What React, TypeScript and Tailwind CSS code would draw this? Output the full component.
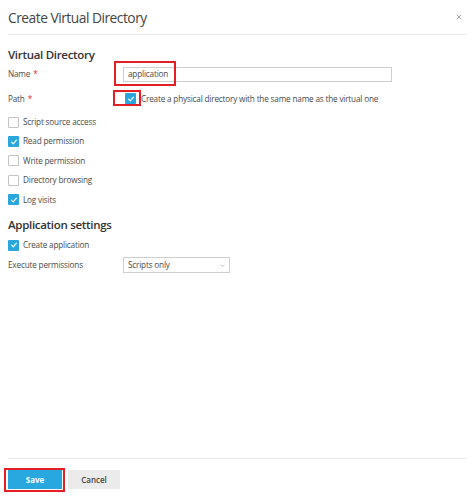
import React from "react";

const font = { fontFamily: '"Open Sans", "Noto Sans", sans-serif' };

function Check({ checked }: { checked: boolean }) {
  if (!checked) {
    return <span className="block w-[11px] h-[11px] shrink-0 border border-[#c4c4c4] bg-white rounded-[1px]" />;
  }
  return (
    <span className="flex items-center justify-center w-[11px] h-[11px] shrink-0 bg-[#2ba6dc] rounded-[1px]">
      <svg viewBox="0 0 10 10" className="w-[8px] h-[8px]" fill="none" stroke="#fff" strokeWidth="1.4" strokeLinecap="round" strokeLinejoin="round">
        <path d="M2 5.2 L4.1 7.3 L8 2.6" />
      </svg>
    </span>
  );
}

function CheckRow({ label, checked }: { label: string; checked: boolean }) {
  return (
    <div className="h-[19.4px] flex items-center gap-[4px]">
      <Check checked={checked} />
      <span className="text-[8.2px] tracking-[-0.18px] text-[#4a4a4a]">{label}</span>
    </div>
  );
}

function Required() {
  return <span className="text-[#e0262b] ml-[3px]">*</span>;
}

export default function App() {
  return (
    <div className="w-[474px] h-[500px] bg-white flex flex-col px-2 text-[#333]" style={font}>
      <div className="h-[35px] flex items-center justify-between border-b border-[#e8e8e8] shrink-0">
        <h1 className="text-[13.8px] tracking-[-0.5px] text-[#444] font-normal leading-none pt-[1px]">Create Virtual Directory</h1>
        <svg viewBox="0 0 8 8" className="w-[6px] h-[6px] mr-[4px]" stroke="#9a9a9a" strokeWidth="1.2">
          <path d="M1 1 L7 7 M7 1 L1 7" />
        </svg>
      </div>

      <div className="flex-1">
        <h2 className="mt-[11px] h-[17px] text-[11.5px] tracking-[-0.3px] leading-[17px] font-semibold text-[#333]">Virtual Directory</h2>

        <div className="h-[22px] grid grid-cols-[115px_1fr] items-center">
          <span className="text-[8.2px] tracking-[-0.18px] text-[#4a4a4a]">
            Name
            <Required />
          </span>
          <div className="relative w-[269px]">
            <div className="h-[15px] border border-[#cfcfcf] bg-white flex items-center px-[4px] text-[8.2px] tracking-[-0.18px] text-[#4a4a4a]">
              application
            </div>
            <div className="absolute left-[-9px] top-[-6px] w-[62px] h-[25px] border-2 border-[#e31e24]" />
          </div>
        </div>

        <div className="mt-[4px] h-[20px] grid grid-cols-[117px_1fr] items-center">
          <span className="text-[8.2px] tracking-[-0.18px] text-[#4a4a4a]">
            Path
            <Required />
          </span>
          <div className="flex items-center gap-[5px]">
            <div className="relative flex">
              <Check checked />
              <div className="absolute left-[-12px] top-[-3px] w-[28px] h-[16px] border-2 border-[#e31e24]" />
            </div>
            <span className="text-[8.2px] tracking-[-0.18px] text-[#4a4a4a]">Create a physical directory with the same name as the virtual one</span>
          </div>
        </div>

        <div className="mt-[3.5px]">
          <CheckRow label="Script source access" checked={false} />
          <CheckRow label="Read permission" checked />
          <CheckRow label="Write permission" checked={false} />
          <CheckRow label="Directory browsing" checked={false} />
          <CheckRow label="Log visits" checked />
        </div>

        <h2 className="mt-[7px] h-[17px] text-[11.5px] tracking-[-0.3px] leading-[17px] font-semibold text-[#333]">Application settings</h2>

        <div className="mt-[2px]">
          <CheckRow label="Create application" checked />
        </div>

        <div className="h-[21px] grid grid-cols-[115px_1fr] items-center">
          <span className="text-[8.2px] tracking-[-0.18px] text-[#4a4a4a]">Execute permissions</span>
          <div className="w-[107px] h-[16px] border border-[#cfcfcf] bg-white flex items-center justify-between px-[4px]">
            <span className="text-[8.2px] tracking-[-0.18px] text-[#4a4a4a]">Scripts only</span>
            <svg viewBox="0 0 8 5" className="w-[5px] h-[3px]" fill="none" stroke="#999" strokeWidth="1">
              <path d="M1 1 L4 4 L7 1" />
            </svg>
          </div>
        </div>
      </div>

      <div className="h-[42px] border-t border-[#e8e8e8] pt-[11px] flex items-start gap-[6px] shrink-0">
        <div className="relative flex">
          <button className="block w-[54px] h-[19px] bg-[#29a7df] text-white text-[8px] font-bold">Save</button>
          <div className="absolute left-[-4px] top-[-2px] right-[-3px] bottom-[-3px] border-2 border-[#e31e24]" />
        </div>
        <button className="block w-[52px] h-[19px] bg-[#ebebeb] text-[#444] text-[8px] font-semibold">Cancel</button>
      </div>
    </div>
  );
}
